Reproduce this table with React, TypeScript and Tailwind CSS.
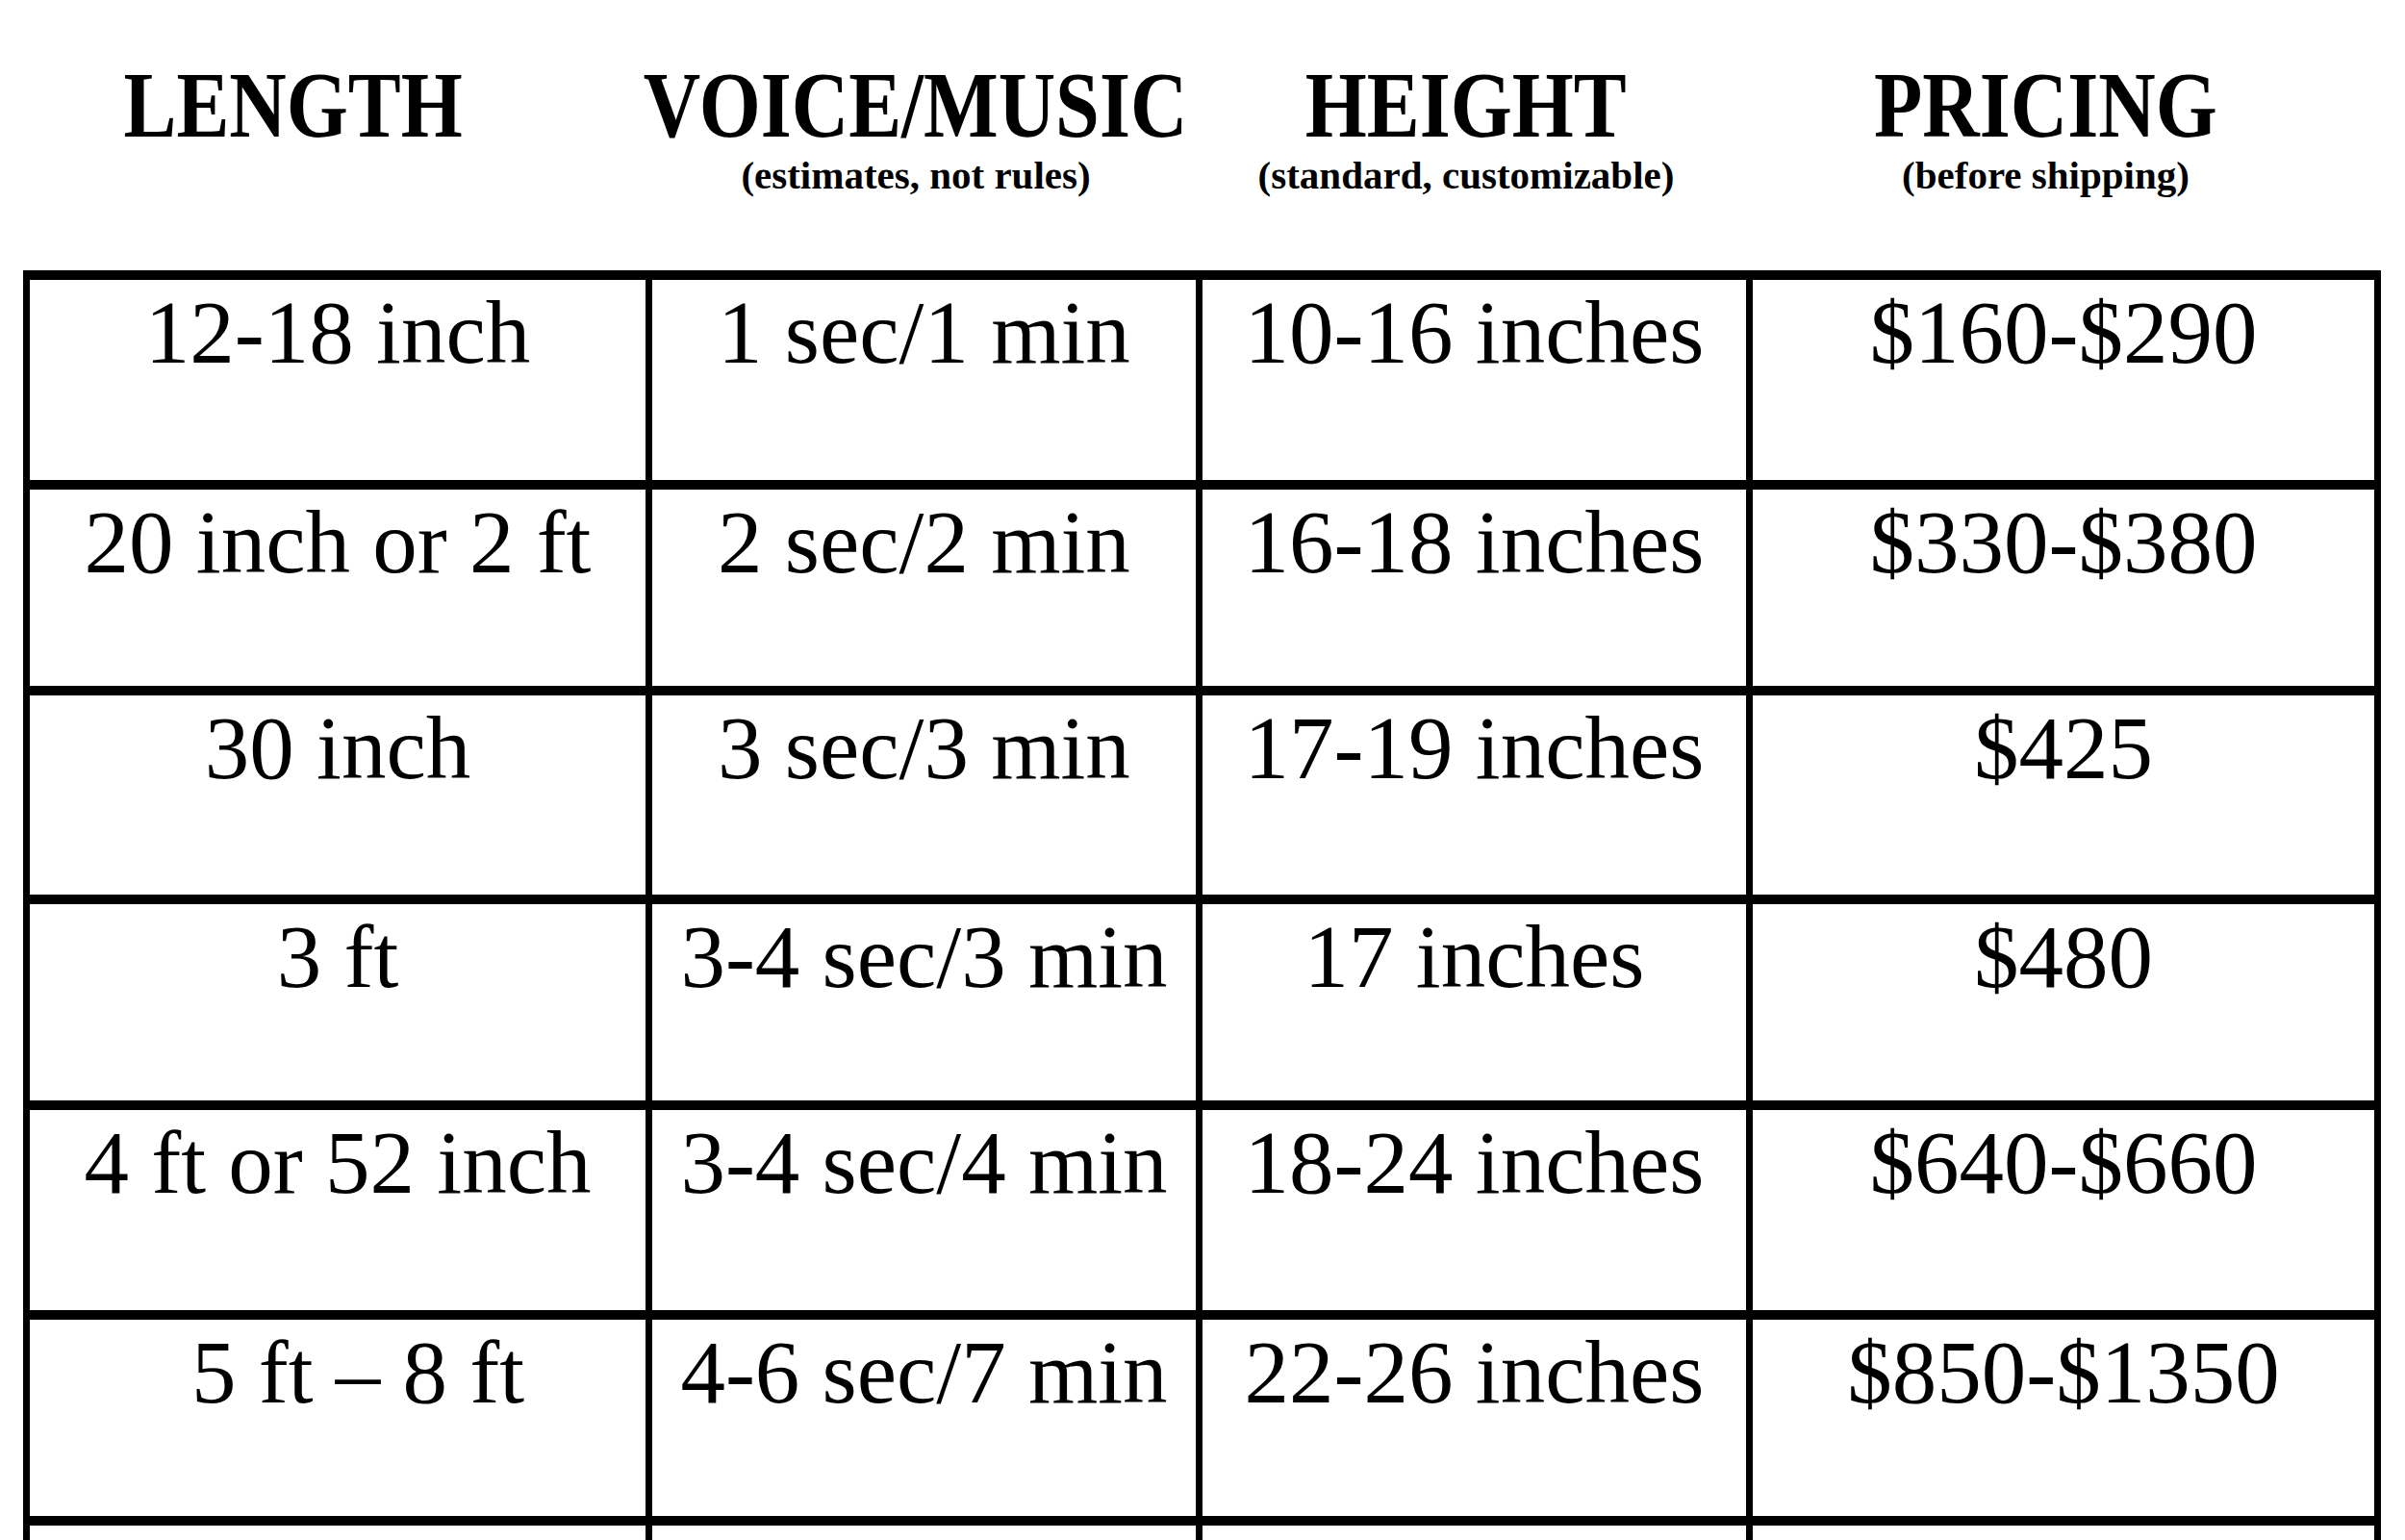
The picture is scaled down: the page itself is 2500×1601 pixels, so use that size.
export default function App() {
  const headers = [
    { title: 'LENGTH', note: '' },
    { title: 'VOICE/MUSIC', note: '(estimates, not rules)' },
    { title: 'HEIGHT', note: '(standard, customizable)' },
    { title: 'PRICING', note: '(before shipping)' },
  ]

  const rows = [
    { h: 208, cells: ['12-18 inch', '1 sec/1 min', '10-16 inches', '$160-$290'] },
    { h: 204, cells: ['20 inch or 2 ft', '2 sec/2 min', '16-18 inches', '$330-$380'] },
    { h: 207, cells: ['30 inch', '3 sec/3 min', '17-19 inches', '$425'] },
    { h: 204, cells: ['3 ft', '3-4 sec/3 min', '17 inches', '$480'] },
    { h: 208, cells: ['4 ft or 52 inch', '3-4 sec/4 min', '18-24 inches', '$640-$660'] },
    { h: 204, cells: ['5 ft \u2013 8 ft', '4-6 sec/7 min', '22-26 inches', '$850-$1350'] },
    { h: 204, cells: ['', '', '', ''] },
  ]

  const widths = ['w-[647px]', 'w-[572px]', 'w-[572px]', 'w-[653px]']

  return (
    <div className="h-[1601px] w-[2500px] overflow-hidden bg-white text-black font-['Liberation_Serif',serif]">
      {/* Column headings */}
      <div className="h-[281px] pt-[60px] grid grid-cols-[609px_686px_458px_1fr]">
        {headers.map((col, i) => (
          <div key={i} className="flex flex-col items-center">
            <span className="inline-block text-[98px] leading-none font-bold scale-x-[0.84] whitespace-nowrap">
              {col.title}
            </span>
            {col.note && (
              <span className="mt-[4px] text-[41px] leading-none font-bold whitespace-nowrap">{col.note}</span>
            )}
          </div>
        ))}
      </div>

      {/* Table */}
      <div className="ml-[24px] w-[2451px] border-t-[10px] border-r-[7px] border-black">
        {rows.map((row, r) => (
          <div key={r} className="flex border-b-[10px] border-black" style={{ height: row.h + 10 }}>
            {row.cells.map((cell, c) => (
              <div
                key={c}
                className={`${widths[c]} shrink-0 border-l-[7px] border-black pt-[8px] text-center text-[93px] leading-none whitespace-nowrap ${
                  r === 5 && c === 0 ? 'pl-[42px]' : ''
                }`}
              >
                {cell}
              </div>
            ))}
          </div>
        ))}
      </div>
    </div>
  )
}
